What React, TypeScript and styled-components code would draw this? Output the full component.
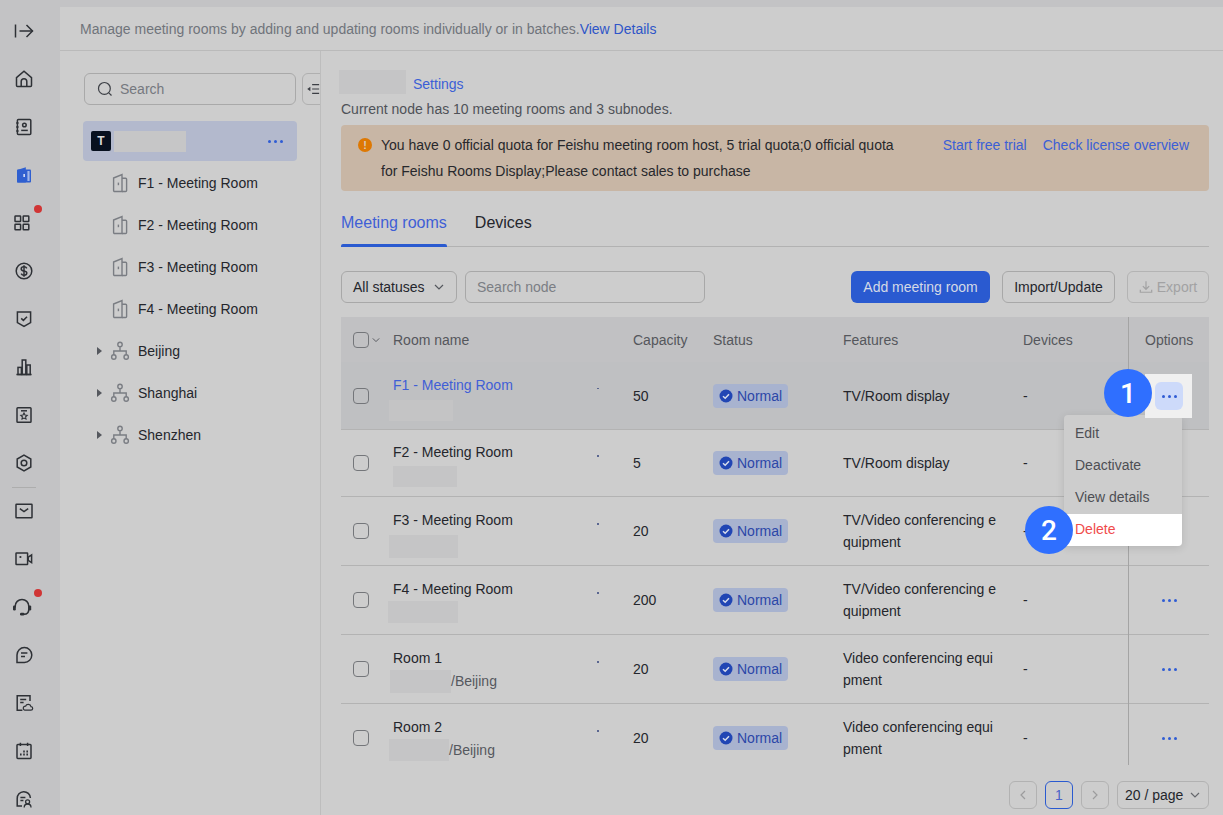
import * as React from 'react';
import styled, { createGlobalStyle } from 'styled-components';

const GlobalStyle = createGlobalStyle`
  html, body { margin: 0; padding: 0; height: 100%; overflow: hidden; }
  body { font-family: "Liberation Sans", Arial, sans-serif; font-size: 14px; color: #212328; background: #cdcdcd; }
  * { box-sizing: border-box; }
`;

type RoomRow = {
  name: string;
  cap: string;
  features: string;
  height: number;
  redact: { w: number; h: number; x: number; y: number };
  suffix?: string;
};

const rooms: RoomRow[] = [
  { name: 'F1 - Meeting Room', cap: '50', features: 'TV/Room display', height: 68, redact: { w: 64, h: 21, x: -4, y: 4 } },
  { name: 'F2 - Meeting Room', cap: '5', features: 'TV/Room display', height: 67, redact: { w: 64, h: 21, x: 0, y: 2 } },
  { name: 'F3 - Meeting Room', cap: '20', features: 'TV/Video conferencing equipment', height: 69, redact: { w: 69, h: 23, x: -4, y: 4 } },
  { name: 'F4 - Meeting Room', cap: '200', features: 'TV/Video conferencing equipment', height: 69, redact: { w: 70, h: 22, x: -5, y: 1 } },
  { name: 'Room 1', cap: '20', features: 'Video conferencing equipment', height: 69, redact: { w: 61, h: 23, x: -3, y: 1 }, suffix: '/Beijing' },
  { name: 'Room 2', cap: '20', features: 'Video conferencing equipment', height: 69, redact: { w: 60, h: 22, x: -4, y: 1 }, suffix: '/Beijing' },
];

const railIcons: { key: string; dot?: boolean; color?: string; shift?: number; body: React.ReactNode }[] = [
  { key: 'expand', body: <><path d="M1.5 3.5v13" /><path d="M5.5 10h13" /><path d="M12.5 4 18.5 10l-6 6" /></> },
  { key: 'home', body: <><path d="M2.5 8.6 10 2.2l7.5 6.4v8a1 1 0 0 1-1 1h-13a1 1 0 0 1-1-1z" /><path d="M7.2 17.5v-5a2.8 2.8 0 0 1 5.6 0v5" /></> },
  { key: 'contacts', body: <><rect x="3.4" y="2.6" width="13.4" height="14.8" rx="1" /><circle cx="10.4" cy="8" r="1.8" /><path d="M7.2 13.4h6.6" /><path d="M2.2 6h2.4M2.2 10h2.4M2.2 14h2.4" /></> },
  { key: 'rooms', color: '#2f5fd0', body: <><rect x="3" y="4.5" width="14" height="13" rx="1" fill="#2f5fd0" stroke="none" /><path d="M3.2 5 11.8 2.2V17.5H3.2z" fill="#2f5fd0" stroke="none" /><path d="M13.4 6h2.2v10h-2.2z" fill="#9fb5e8" stroke="none" /><rect x="9.4" y="9" width="1.5" height="3" fill="#dfe6f7" stroke="none" /></> },
  { key: 'apps', dot: true, shift: -2, body: <><rect x="3" y="3" width="5.6" height="5.6" rx=".6" /><rect x="11.2" y="3" width="5.6" height="5.6" rx=".6" /><rect x="3" y="11.2" width="5.6" height="5.6" rx=".6" /><rect x="11.2" y="11.2" width="5.6" height="5.6" rx=".6" /></> },
  { key: 'cost', body: <><circle cx="10" cy="10" r="7.8" /><path d="M12.8 7.4c-.5-1-1.6-1.6-2.8-1.6-1.6 0-2.8.8-2.8 2.1 0 2.9 5.6 1.4 5.6 4.2 0 1.3-1.2 2.1-2.8 2.1-1.2 0-2.3-.6-2.8-1.6" /><path d="M10 4.2v11.6" /></> },
  { key: 'shield', body: <><path d="M3.4 3h13.2v10.6L10 17.4l-6.6-3.8z" /><path d="M7.2 9.4 9.4 11.4l3.6-3.6" /></> },
  { key: 'chart', body: <><path d="M2.4 17.5h15.2" /><rect x="4" y="10.4" width="3.4" height="7.1" /><rect x="8.2" y="3" width="3.6" height="14.5" /><rect x="12.8" y="8" width="3.4" height="9.5" /></> },
  { key: 'medal', body: <><rect x="3" y="2.8" width="14" height="14.4" rx=".8" /><path d="M7 5.8h6" /><path d="m10 8 1 2 2.2.3-1.6 1.5.4 2.2-2-1-2 1 .4-2.2-1.6-1.5 2.2-.3z" strokeWidth="1.1" /></> },
  { key: 'hex', body: <><path d="M10 2.2 16.8 6v8L10 17.8 3.2 14V6z" /><circle cx="10" cy="10" r="2.8" /></> },
  { key: 'mail', body: <><rect x="2" y="3.2" width="16" height="13.6" rx=".5" /><path d="M5.8 7.6l4.2 3 4.2-3" /></> },
  { key: 'video', body: <><rect x="2" y="4" width="11.6" height="11.6" rx=".5" /><circle cx="6.4" cy="8" r="1.1" fill="currentColor" stroke="none" /><path d="M14.2 8.2 17.6 6v7.6l-3.4-2.2z" /></> },
  { key: 'support', dot: true, shift: -2, body: <><path d="M3.2 10.5V9.2a6.8 6.8 0 0 1 13.6 0v3c0 3-1.9 5-4.8 5" /><rect x="1" y="8.4" width="2.8" height="5" rx="1.2" fill="currentColor" stroke="none" /><rect x="16.4" y="8.4" width="2.8" height="5" rx="1.2" fill="currentColor" stroke="none" /><rect x="8" y="15.8" width="4.4" height="2.6" rx="1.2" fill="currentColor" stroke="none" /></> },
  { key: 'chat', body: <><path d="M3 17.4V10a7.4 7.4 0 1 1 7.4 7.4z" /><path d="M7 8h6.4M7 11.4h4" /></> },
  { key: 'doc', body: <><path d="M16 8V2.8H3.2v14.4h5.2" /><path d="M6.2 6.4h6M6.2 9.4h3.4" /><path d="M11 17.2h5.8a1.8 1.8 0 0 0 .2-3.6 2.8 2.8 0 0 0-5.4-.4 2 2 0 0 0-.6 4z" strokeWidth="1.2" /></> },
  { key: 'calendar', body: <><rect x="3" y="3.4" width="14" height="14" rx=".8" /><path d="M6.4 1.8v3.2M13.6 1.8v3.2" /><path d="M6 13.6h1.6M9.2 13.6h1.6M12.4 13.6h1.6M9.2 10.6h1.6M12.4 10.6h1.6" strokeWidth="2" /></> },
  { key: 'ticket', body: <><path d="M8 17H3.2V9.5a6.6 6.6 0 0 1 13.2-.5" /><path d="M6.4 8.4h5M6.4 11.4h3" /><circle cx="13.6" cy="12.8" r="2" strokeWidth="1.3" /><path d="M10.2 18.4a3.4 3.4 0 0 1 6.8 0" strokeWidth="1.3" /></> },
];

const DoorIcon = () => (
  <TreeSvg viewBox="0 0 20 20" width="20" height="20">
    <path d="M3.6 5 12 1.6v16.9H4.6a1 1 0 0 1-1-1z" />
    <path d="M12 5.2h3.6a1 1 0 0 1 1 1v11.3a1 1 0 0 1-1 1H12" />
    <path d="M8.4 9.6v2.6" />
  </TreeSvg>
);

const OrgIcon = () => (
  <TreeSvg viewBox="0 0 20 20" width="20" height="20">
    <circle cx="10" cy="3.4" r="2.2" />
    <circle cx="3.8" cy="16" r="2.2" />
    <circle cx="16.2" cy="16" r="2.2" />
    <path d="M10 5.6v4.4M3.8 13.8V10h12.4v3.8" />
  </TreeSvg>
);

const Dots = () => (
  <DotsWrap>
    {[0, 1, 2].map((i) => (
      <DotItem key={i} />
    ))}
  </DotsWrap>
);

const Chevron = ({ dir = 'down' }: { dir?: 'down' | 'left' | 'right' }) => (
  <svg viewBox="0 0 12 12" width="12" height="12" fill="none" stroke="currentColor" strokeWidth="1.2">
    {dir === 'down' && <path d="m2 4 4 4 4-4" />}
    {dir === 'left' && <path d="M8 2 4 6l4 4" />}
    {dir === 'right' && <path d="m4 2 4 4-4 4" />}
  </svg>
);

export default function App() {
  return (
    <Shell>
      <GlobalStyle />
      <Rail>
        {railIcons.map((ic) => (
          <React.Fragment key={ic.key}>
            {ic.key === 'mail' && <RailDivider />}
            <RailItem $color={ic.color} $shift={ic.shift}>
              <RailSvg viewBox="0 0 20 20" width="20" height="20">{ic.body}</RailSvg>
              {ic.dot && <RedDot />}
            </RailItem>
          </React.Fragment>
        ))}
      </Rail>
      <Main>
        <InfoBar>
          Manage meeting rooms by adding and updating rooms individually or in batches.<BlueLink>View Details</BlueLink>
        </InfoBar>
        <Body>
          <TreePanel>
            <SearchBox>
              <svg viewBox="0 0 16 16" width="16" height="16" fill="none" stroke="#3c3f45" strokeWidth="1.2">
                <circle cx="7.4" cy="7.4" r="5.9" />
                <path d="m11.8 11.8 2.7 2.7" />
              </svg>
              <span>Search</span>
            </SearchBox>
            <CollapseBtn>
              <svg viewBox="0 0 16 16" width="14" height="14" fill="none" stroke="#3c3f45" strokeWidth="1.3">
                <path d="M7 3h8M7 8h8M7 13h8" />
                <path d="M5 5.4v5.2L1.4 8z" fill="#3c3f45" stroke="none" />
              </svg>
            </CollapseBtn>
            <RootNode>
              <Logo>T</Logo>
              <RootRedact />
              <Dots />
            </RootNode>
            {['F1', 'F2', 'F3', 'F4'].map((f) => (
              <TreeRow key={f}>
                <Caret $hidden />
                <DoorIcon />
                <span>{f} - Meeting Room</span>
              </TreeRow>
            ))}
            {['Beijing', 'Shanghai', 'Shenzhen'].map((c) => (
              <TreeRow key={c}>
                <Caret />
                <OrgIcon />
                <span>{c}</span>
              </TreeRow>
            ))}
          </TreePanel>
          <Content>
            <TitleRow>
              <TitleRedact />
              <SettingsLink>Settings</SettingsLink>
            </TitleRow>
            <NodeInfo>Current node has 10 meeting rooms and 3 subnodes.</NodeInfo>
            <Alert>
              <AlertIcon>!</AlertIcon>
              <AlertText>
                You have 0 official quota for Feishu meeting room host, 5 trial quota;0 official quota for Feishu Rooms
                Display;Please contact sales to purchase
              </AlertText>
              <AlertLinks>
                <SmallLink>Start free trial</SmallLink>
                <SmallLink>Check license overview</SmallLink>
              </AlertLinks>
            </Alert>
            <Tabs>
              <Tab $active>Meeting rooms</Tab>
              <Tab>Devices</Tab>
            </Tabs>
            <Toolbar>
              <SelectBox>
                All statuses
                <Chevron />
              </SelectBox>
              <NodeInput>Search node</NodeInput>
              <ToolbarSpacer />
              <PrimaryBtn>Add meeting room</PrimaryBtn>
              <OutlineBtn>Import/Update</OutlineBtn>
              <DisabledBtn>
                <svg viewBox="0 0 16 16" width="14" height="14" fill="none" stroke="currentColor" strokeWidth="1.4">
                  <path d="M8 1.5v9M4.4 7 8 10.6 11.6 7M1.5 11v3h13v-3" />
                </svg>
                Export
              </DisabledBtn>
            </Toolbar>
            <Table>
              <HeadRow>
                <CheckCell>
                  <Checkbox />
                  <HeadCaret><Chevron /></HeadCaret>
                </CheckCell>
                <HeadCell $span={2}>Room name</HeadCell>
                <HeadCell>Capacity</HeadCell>
                <HeadCell>Status</HeadCell>
                <HeadCell>Features</HeadCell>
                <HeadCell>Devices</HeadCell>
                <OptionsHead>Options</OptionsHead>
              </HeadRow>
              {rooms.map((r, i) => (
                <Row key={r.name} $height={r.height} $active={i === 0}>
                  <CheckCell>
                    <Checkbox />
                  </CheckCell>
                  <NameCell>
                    <RoomName $active={i === 0}>{r.name}</RoomName>
                    <RoomPath>
                      <PathRedact $w={r.redact.w} $h={r.redact.h} $x={r.redact.x} $y={r.redact.y} $active={i === 0} />
                      {r.suffix && <PathText>{r.suffix}</PathText>}
                    </RoomPath>
                  </NameCell>
                  <DotCell>
                    <TinyDot />
                  </DotCell>
                  <Cell>{r.cap}</Cell>
                  <Cell>
                    <Badge>
                      <svg viewBox="0 0 14 14" width="14" height="14">
                        <circle cx="7" cy="7" r="6.5" fill="#2146b4" />
                        <path d="M4 7.2 6.2 9.3 10 5.2" fill="none" stroke="#d6dcec" strokeWidth="1.5" />
                      </svg>
                      Normal
                    </Badge>
                  </Cell>
                  <Cell>
                    <FeatureText>{r.features}</FeatureText>
                  </Cell>
                  <Cell>-</Cell>
                  <OptionsCell>
                    {i === 0 ? (
                      <>
                        <Menu>
                          <MenuItem>Edit</MenuItem>
                          <MenuItem>Deactivate</MenuItem>
                          <MenuItem>View details</MenuItem>
                          <DeleteItem>Delete</DeleteItem>
                          <StepTwo>2</StepTwo>
                        </Menu>
                        <Spot>
                          <MoreBtn>
                            <Dots />
                          </MoreBtn>
                        </Spot>
                        <StepOne>1</StepOne>
                      </>
                    ) : i > 2 ? (
                      <Dots />
                    ) : null}
                  </OptionsCell>
                </Row>
              ))}
            </Table>
            <Pagination>
              <PageBtn $muted><Chevron dir="left" /></PageBtn>
              <PageBtn $current>1</PageBtn>
              <PageBtn $muted><Chevron dir="right" /></PageBtn>
              <PageSize>
                20 / page
                <SizeCaret><Chevron /></SizeCaret>
              </PageSize>
            </Pagination>
          </Content>
        </Body>
      </Main>
    </Shell>
  );
}

const Shell = styled.div`
  display: flex;
  height: 815px;
  padding-top: 7px;
  overflow: hidden;
  background: #c3c3c5;
`;

const Rail = styled.nav`
  width: 60px;
  flex-shrink: 0;
  display: flex;
  flex-direction: column;
  align-items: flex-start;
`;

const RailItem = styled.div<{ $color?: string; $shift?: number }>`
  position: relative;
  flex-shrink: 0;
  width: 48px;
  height: 48px;
  display: flex;
  align-items: center;
  justify-content: center;
  color: ${(p) => p.$color || '#2e3136'};
  svg {
    margin-left: ${(p) => (p.$shift || 0) * 2}px;
  }
`;

const RailSvg = styled.svg`
  fill: none;
  stroke: currentColor;
  stroke-width: 1.5;
`;

const RedDot = styled.span`
  position: absolute;
  left: 34px;
  top: 6px;
  width: 8px;
  height: 8px;
  border-radius: 50%;
  background: #d03535;
`;

const RailDivider = styled.div`
  flex-shrink: 0;
  width: 24px;
  height: 1px;
  margin-left: 12px;
  margin-bottom: -1px;
  background: #adadad;
`;

const Main = styled.div`
  flex: 1;
  min-width: 0;
  display: flex;
  flex-direction: column;
  background: #cdcdcd;
`;

const InfoBar = styled.div`
  height: 44px;
  flex-shrink: 0;
  display: flex;
  align-items: center;
  padding-left: 20px;
  color: #70747b;
  border-bottom: 1px solid #bababa;
`;

const BlueLink = styled.span`
  color: #2e55c8;
`;

const Body = styled.div`
  flex: 1;
  display: flex;
  min-height: 0;
`;

const TreePanel = styled.aside`
  position: relative;
  width: 261px;
  flex-shrink: 0;
  padding: 22px 23px 0;
  overflow: hidden;
  border-right: 1px solid #bdbdbd;
`;

const SearchBox = styled.div`
  width: 212px;
  margin-left: 1px;
  height: 32px;
  display: flex;
  align-items: center;
  gap: 7px;
  padding: 0 12px;
  border: 1px solid #a9a9a9;
  border-radius: 6px;
  color: #75787f;
`;

const CollapseBtn = styled.div`
  position: absolute;
  left: 242px;
  top: 22px;
  width: 32px;
  height: 32px;
  display: flex;
  align-items: center;
  padding-left: 3px;
  border: 1px solid #b0b0b0;
  border-radius: 6px;
`;

const RootNode = styled.div`
  width: 214px;
  height: 40px;
  margin-top: 16px;
  margin-bottom: 1px;
  display: flex;
  align-items: center;
  padding: 0 14px 0 8px;
  background: #b3b9cd;
  border-radius: 4px;
`;

const Logo = styled.div`
  width: 20px;
  height: 20px;
  border-radius: 2px;
  background: #07101f;
  color: #d8d8d8;
  font-size: 12px;
  font-weight: 700;
  display: flex;
  align-items: center;
  justify-content: center;
`;

const RootRedact = styled.div`
  width: 72px;
  height: 21px;
  margin-left: 3px;
  margin-right: auto;
  background: #c6c6c7;
`;

const DotsWrap = styled.span`
  display: inline-flex;
  align-items: center;
  gap: 3px;
`;

const DotItem = styled.i`
  display: block;
  width: 3px;
  height: 3px;
  border-radius: 50%;
  background: #2f5cd4;
`;

const TreeRow = styled.div`
  height: 42px;
  display: flex;
  align-items: center;
  padding-left: 14px;
  gap: 8px;
  color: #24262c;
`;

const Caret = styled.span<{ $hidden?: boolean }>`
  width: 0;
  height: 0;
  border-left: 5px solid ${(p) => (p.$hidden ? 'transparent' : '#55585e')};
  border-top: 4px solid transparent;
  border-bottom: 4px solid transparent;
`;

const TreeSvg = styled.svg`
  fill: none;
  stroke: #7a7d83;
  stroke-width: 1.4;
`;

const Content = styled.main`
  flex: 1;
  min-width: 0;
  padding: 19px 14px 0 20px;
`;

const TitleRow = styled.div`
  height: 24px;
  display: flex;
  align-items: center;
  gap: 7px;
  margin-left: -2px;
`;

const TitleRedact = styled.div`
  width: 67px;
  height: 24px;
  background: #c5c5c6;
`;

const SmallLink = styled.span`
  color: #3b5fd6;
`;

const SettingsLink = styled(SmallLink)`
  margin-top: 4px;
`;

const NodeInfo = styled.div`
  height: 22px;
  line-height: 22px;
  margin-top: 4px;
  color: #4f5258;
`;

const Alert = styled.div`
  height: 66px;
  margin-top: 5px;
  display: flex;
  padding: 7px 20px 0 17px;
  background: #c8b6a5;
  border-radius: 4px;
`;

const AlertIcon = styled.div`
  width: 14px;
  height: 14px;
  margin-top: 6px;
  border-radius: 50%;
  background: #de7802;
  color: #d8c8b8;
  font-size: 11px;
  font-weight: 700;
  line-height: 14px;
  text-align: center;
  flex-shrink: 0;
`;

const AlertText = styled.div`
  width: 530px;
  margin-left: 9px;
  line-height: 26px;
  color: #27282c;
`;

const AlertLinks = styled.div`
  margin-left: auto;
  display: flex;
  gap: 16px;
  line-height: 26px;
  height: 26px;
`;

const Tabs = styled.div`
  height: 40px;
  margin-top: 16px;
  display: flex;
  gap: 28px;
  border-bottom: 1px solid #b2b2b2;
`;

const Tab = styled.div<{ $active?: boolean }>`
  position: relative;
  font-size: 16px;
  line-height: 32px;
  color: ${(p) => (p.$active ? '#3f5fd6' : '#24262c')};
  ${(p) =>
    p.$active &&
    `&::after {
      content: '';
      position: absolute;
      left: 0;
      right: 0;
      bottom: -1px;
      height: 3px;
      border-radius: 2px 2px 0 0;
      background: #2a5ad0;
    }`}
`;

const Toolbar = styled.div`
  height: 32px;
  margin-top: 24px;
  display: flex;
  align-items: stretch;
`;

const Field = styled.div`
  display: flex;
  align-items: center;
  border: 1px solid #a8a8a8;
  border-radius: 6px;
`;

const SelectBox = styled(Field)`
  width: 116px;
  padding: 0 11px;
  justify-content: space-between;
  color: #24262c;
  svg {
    color: #55585e;
  }
`;

const NodeInput = styled(Field)`
  width: 240px;
  margin-left: 8px;
  padding: 0 11px;
  color: #7b7e84;
`;

const ToolbarSpacer = styled.div`
  flex: 1;
`;

const PrimaryBtn = styled.div`
  width: 139px;
  display: flex;
  align-items: center;
  justify-content: center;
  border-radius: 6px;
  background: #2a5ad0;
  color: #d4d9e6;
`;

const OutlineBtn = styled(Field)`
  width: 113px;
  margin-left: 12px;
  justify-content: center;
  color: #24262c;
`;

const DisabledBtn = styled(Field)`
  width: 82px;
  margin-left: 12px;
  justify-content: center;
  gap: 4px;
  color: #a2a2a3;
  border-color: #b4b4b4;
`;

const Table = styled.div`
  position: relative;
  height: 448px;
  margin-top: 14px;
  overflow: hidden;
`;

const columns = '52px 204px 36px 80px 130px 180px 105px 81px';

const HeadRow = styled.div`
  display: grid;
  grid-template-columns: ${columns};
  height: 45px;
  padding-top: 1px;
  align-items: center;
  background: #c1c1c3;
  color: #55575c;
`;

const Row = styled.div<{ $height: number; $active?: boolean }>`
  position: relative;
  z-index: ${(p) => (p.$active ? 2 : 1)};
  display: grid;
  grid-template-columns: ${columns};
  height: ${(p) => p.$height}px;
  align-items: center;
  background: ${(p) => (p.$active ? '#bfc0c2' : 'transparent')};
  border-bottom: 1px solid #b3b3b3;
`;

const HeadCell = styled.div<{ $span?: number }>`
  ${(p) => p.$span && `grid-column: span ${p.$span};`}
`;

const OptionsHead = styled.div`
  align-self: stretch;
  display: flex;
  align-items: center;
  padding-left: 16px;
  margin-top: -1px;
  border-left: 1px solid #a4a4a4;
`;

const CheckCell = styled.div`
  display: flex;
  align-items: center;
  padding-left: 12px;
`;

const Checkbox = styled.span`
  width: 16px;
  height: 16px;
  border: 1px solid #74767a;
  border-radius: 4px;
`;

const HeadCaret = styled.span`
  display: flex;
  margin-left: 1px;
  color: #55575c;
  transform: scale(0.8);
`;

const NameCell = styled.div`
  display: flex;
  flex-direction: column;
`;

const RoomName = styled.div<{ $active?: boolean }>`
  line-height: 22px;
  color: ${(p) => (p.$active ? '#3f5fd6' : '#24262c')};
`;

const RoomPath = styled.div`
  height: 22px;
  display: flex;
  align-items: center;
  color: #55585e;
`;

const PathRedact = styled.div<{ $w: number; $h: number; $x: number; $y: number; $active?: boolean }>`
  flex-shrink: 0;
  width: ${(p) => p.$w}px;
  height: ${(p) => p.$h}px;
  margin-left: ${(p) => p.$x}px;
  margin-top: ${(p) => p.$y * 2}px;
  background: ${(p) => (p.$active ? '#c4c4c5' : '#c5c5c6')};
`;

const PathText = styled.span`
  line-height: 22px;
  margin-top: 2px;
`;

const DotCell = styled.div`
  display: flex;
`;

const TinyDot = styled.i`
  display: block;
  width: 1.5px;
  height: 1.5px;
  margin-bottom: 14px;
  background: #5a6690;
`;

const Cell = styled.div`
  color: #24262c;
`;

const Badge = styled.span`
  display: inline-flex;
  align-items: center;
  gap: 4px;
  height: 24px;
  width: 75px;
  padding-left: 6px;
  border-radius: 4px;
  background: #a8b3cf;
  color: #2c47a8;
`;

const FeatureText = styled.div`
  width: 155px;
  line-height: 22px;
  word-break: break-all;
`;

const OptionsCell = styled.div`
  position: relative;
  align-self: stretch;
  display: flex;
  align-items: center;
  justify-content: center;
  border-left: 1px solid #a4a4a4;
  margin-bottom: -1px;
`;

const Spot = styled.div`
  position: absolute;
  left: 16px;
  top: 12px;
  width: 47px;
  height: 44px;
  padding: 8px 0 0 10px;
  background: #f0f0f0;
`;

const MoreBtn = styled.div`
  width: 28px;
  height: 28px;
  display: flex;
  align-items: center;
  justify-content: center;
  border-radius: 6px;
  background: #cddafa;
`;

const Step = styled.div`
  position: absolute;
  width: 48px;
  height: 48px;
  display: flex;
  align-items: center;
  justify-content: center;
  border-radius: 50%;
  background: #2f6fff;
  color: #fff;
  font-family: Roboto, "Liberation Sans", sans-serif;
  font-size: 28px;
  font-weight: 500;
`;

const StepOne = styled(Step)`
  left: -25px;
  top: 7px;
`;

const StepTwo = styled(Step)`
  left: -39px;
  top: 91px;
`;

const Menu = styled.div`
  position: absolute;
  left: -65px;
  top: 53px;
  width: 118px;
  height: 131px;
  padding-top: 2px;
  border-radius: 4px;
  background: #cdcdcd;
  box-shadow: 0 2px 8px rgba(0, 0, 0, 0.12);
`;

const MenuItem = styled.div`
  height: 32px;
  display: flex;
  align-items: center;
  padding-left: 11px;
  color: #4d4f54;
`;

const DeleteItem = styled(MenuItem)`
  margin-top: 1px;
  padding-bottom: 2px;
  background: #fff;
  color: #f04b4b;
  border-radius: 0 0 4px 4px;
`;

const Pagination = styled.div`
  height: 28px;
  margin-top: 16px;
  display: flex;
  justify-content: flex-end;
  gap: 8px;
`;

const PageBtn = styled.div<{ $muted?: boolean; $current?: boolean }>`
  width: 28px;
  display: flex;
  align-items: center;
  justify-content: center;
  border: 1px solid ${(p) => (p.$current ? '#2a5ad0' : '#b2b2b2')};
  border-radius: 6px;
  color: ${(p) => (p.$muted ? '#9c9c9d' : '#4a62c8')};
`;

const PageSize = styled.div`
  width: 92px;
  display: flex;
  align-items: center;
  justify-content: space-between;
  padding: 0 7px;
  border: 1px solid #b2b2b2;
  border-radius: 6px;
  color: #24262c;
`;

const SizeCaret = styled.span`
  display: flex;
  color: #66686d;
`;
